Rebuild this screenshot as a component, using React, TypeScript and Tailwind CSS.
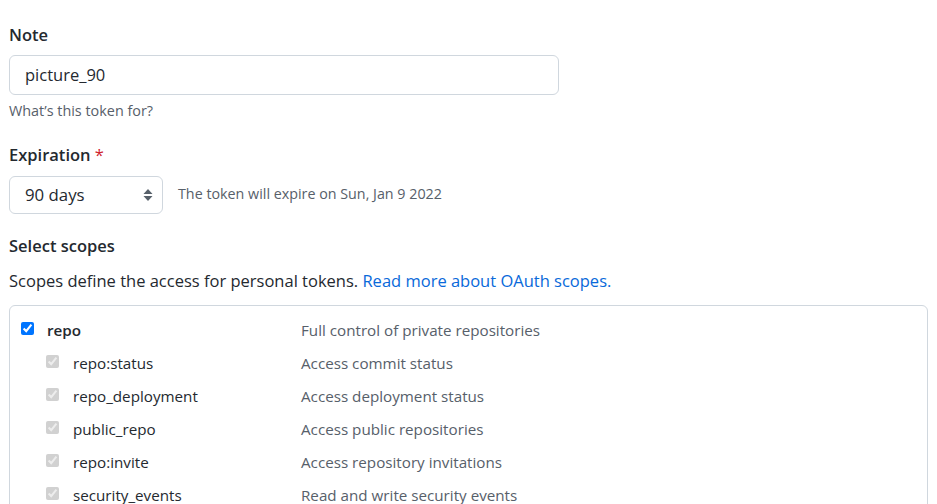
import React from "react";

const scopes = [
  { name: "repo:status", desc: "Access commit status" },
  { name: "repo_deployment", desc: "Access deployment status" },
  { name: "public_repo", desc: "Access public repositories" },
  { name: "repo:invite", desc: "Access repository invitations" },
  { name: "security_events", desc: "Read and write security events" },
];

function SelectArrows() {
  return (
    <svg width="10" height="16" viewBox="0 0 10 16" className="block">
      <path d="M5 2 L9.5 7 H0.5 Z" fill="#57606a" />
      <path d="M5 14 L9.5 9 H0.5 Z" fill="#57606a" />
    </svg>
  );
}

export default function App() {
  return (
    <div
      className="w-[937px] h-[504px] overflow-hidden bg-white text-[#24292f] px-[9px] pt-[23px]"
      style={{ fontFamily: '"Open Sans", "Noto Sans", sans-serif' }}
    >
      <div className="text-[16.5px] leading-[24px] font-semibold">Note</div>
      <div className="mt-[8px] w-[550px] h-[40px] rounded-[6px] border border-[#d0d7de] flex items-center pl-[15px] text-[16.5px]">
        picture_90
      </div>
      <div className="mt-[6px] text-[14.4px] leading-[20px] text-[#57606a]">What’s this token for?</div>

      <div className="mt-[22px] text-[16.5px] leading-[24px] font-semibold">
        Expiration <span className="text-[#cf222e] font-normal">*</span>
      </div>
      <div className="mt-[9px] flex items-center">
        <div className="w-[154px] h-[38px] rounded-[6px] border border-[#d0d7de] flex items-center justify-between pl-[15px] pr-[9px] text-[16.8px]">
          <span>90 days</span>
          <SelectArrows />
        </div>
        <div className="ml-[15px] text-[14.3px] text-[#57606a] -translate-y-[1px]">The token will expire on Sun, Jan 9 2022</div>
      </div>

      <div className="mt-[20px] text-[16.5px] leading-[24px] font-semibold">Select scopes</div>
      <div className="mt-[11px] text-[16.5px] leading-[24px]">
        Scopes define the access for personal tokens.{" "}
        <a className="text-[#0969da]">Read more about OAuth scopes.</a>
      </div>

      <div className="mt-[12px] w-[919px] h-[300px] rounded-[6px] border border-[#d0d7de] pt-[8px] pl-[11px]">
        <div className="flex items-center h-[33px] text-[15.2px]">
          <div className="w-[280px] flex items-center">
            <input type="checkbox" checked readOnly className="m-0 w-[13px] h-[13px] -translate-y-[2px]" />
            <span className="ml-[13px] font-semibold">repo</span>
          </div>
          <span className="text-[#57606a]">Full control of private repositories</span>
        </div>
        {scopes.map((s) => (
          <div key={s.name} className="flex items-center h-[33px] text-[15.2px]">
            <div className="w-[280px] flex items-center pl-[25px]">
              <input type="checkbox" checked disabled className="m-0 w-[13px] h-[13px] -translate-y-[2px]" />
              <span className="ml-[14px]">{s.name}</span>
            </div>
            <span className="text-[#57606a]">{s.desc}</span>
          </div>
        ))}
      </div>
    </div>
  );
}
